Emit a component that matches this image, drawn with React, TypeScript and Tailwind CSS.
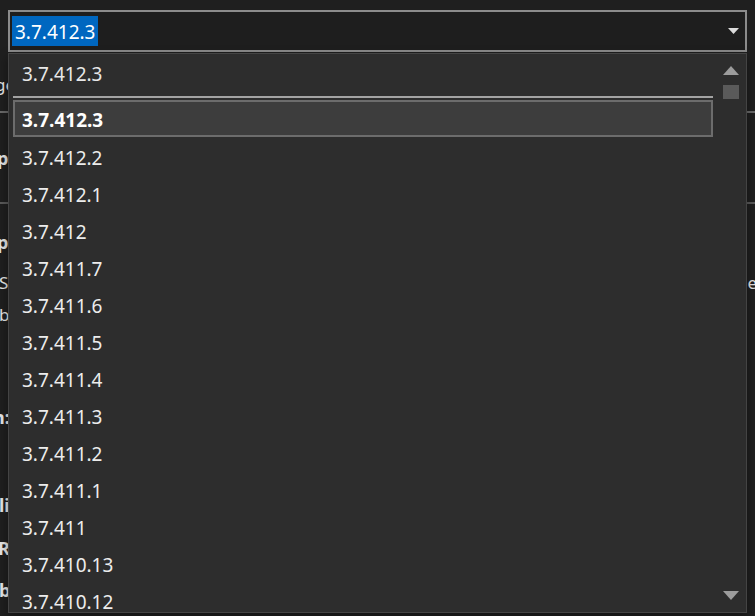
import React from 'react';

const versions = [
  '3.7.412.2',
  '3.7.412.1',
  '3.7.412',
  '3.7.411.7',
  '3.7.411.6',
  '3.7.411.5',
  '3.7.411.4',
  '3.7.411.3',
  '3.7.411.2',
  '3.7.411.1',
  '3.7.411',
  '3.7.410.13',
  '3.7.410.12',
  '3.7.410.11',
];

function Triangle({ up, className }: { up?: boolean; className: string }) {
  return (
    <svg width="16" height="9" viewBox="0 0 16 9" className={className}>
      {up ? <polygon points="0,9 16,9 8,0" /> : <polygon points="0,0 16,0 8,9" />}
    </svg>
  );
}

export default function App() {
  return (
    <div className="relative w-[755px] h-[616px] overflow-hidden bg-[#1f1f1f] font-['Noto_Sans',sans-serif] text-[#e6e6e6]">
      {/* Page behind the drop-down */}
      <div className="flex flex-col pt-[10px]">
        {/* Combo box */}
        <div className="ml-[8px] w-[739px] h-[42px] border-2 border-[#8c8c8c] bg-[#1e1e1e] flex items-center pl-[2px] pr-[6px]">
          <span className="h-[30px] px-[3px] bg-[#0067c0] text-white text-[19px] leading-[30px] pt-[1px]">3.7.412.3</span>
          <svg width="11" height="6" viewBox="0 0 11 6" className="ml-auto fill-[#dcdcdc]">
            <polygon points="0,0 11,0 5.5,6" />
          </svg>
        </div>

        <div className="h-[20px]" />
        <div className="h-[26px] flex items-center text-[17px] -ml-[5px]">ge</div>
        <div className="h-[13px]" />
        <div className="h-[2px] bg-[#6a6a6a]" />
        <div className="h-[32px]" />
        <div className="h-[26px] flex items-center text-[18px] font-bold -ml-[3px]">p</div>
        <div className="h-[31px]" />
        <div className="h-[2px] bg-[#5a5a5a]" />
        <div className="h-[25px]" />
        <div className="h-[26px] flex items-center text-[18px] font-bold -ml-[3px]">p</div>
        <div className="h-[15px]" />
        <div className="h-[26px] flex items-center justify-between text-[17px]">
          <span className="-ml-[1px]">Si</span>
          <span className="-mr-[2px]">e</span>
        </div>
        <div className="h-[6px]" />
        <div className="h-[26px] flex items-center text-[17px] -ml-[1px]">b</div>
        <div className="h-[76px]" />
        <div className="h-[26px] flex items-center text-[18px] font-bold -ml-[7px]">n:</div>
        <div className="h-[62px]" />
        <div className="h-[26px] flex items-center text-[18px] font-bold -ml-[1px]">li</div>
        <div className="h-[17px]" />
        <div className="h-[26px] flex items-center text-[18px] font-bold -ml-[2px]">R</div>
        <div className="h-[16px]" />
        <div className="h-[26px] flex items-center text-[18px] font-bold -ml-[1px]">b</div>
      </div>

      {/* Drop-down list */}
      <div className="absolute left-[8px] top-[53px] w-[739px] h-[560px] border border-[#444444] bg-[#2d2d2d] flex shadow-[0_4px_10px_rgba(0,0,0,0.4)]">
        <div className="w-[704px] pl-[4px] flex flex-col overflow-hidden">
          <div className="w-[700px] h-[44px] shrink-0 border-b-2 border-[#a3a3a3] flex items-center pl-[9px] pb-[2px] text-[19px] text-[#e8e8e8]">
            3.7.412.3
          </div>
          <div className="h-[2px] shrink-0" />
          <div className="w-[700px] h-[37px] shrink-0 border-2 border-[#6c6c6c] bg-[#3d3d3d] flex items-center pl-[7px] pt-[4px] text-[19px] font-bold text-white">
            3.7.412.3
          </div>
          {versions.map((v) => (
            <div key={v} className="h-[37px] shrink-0 flex items-center pl-[9px] pt-[6px] text-[19px] text-[#ececec]">
              {v}
            </div>
          ))}
        </div>
        <div className="w-[33px] flex flex-col items-center pt-[12px] pb-[12px] pl-[3px]">
          <Triangle up className="fill-[#9c9c9c]" />
          <div className="mt-[10px] w-[16px] h-[14px] bg-[#5a5a5a]" />
          <div className="flex-1" />
          <Triangle className="fill-[#9c9c9c]" />
        </div>
      </div>
    </div>
  );
}
